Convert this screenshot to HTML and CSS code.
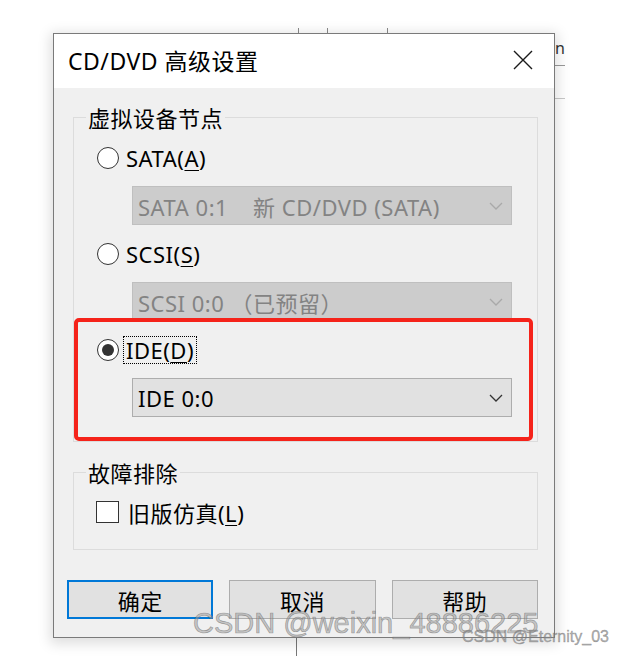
FILE: index.html
```html
<!DOCTYPE html>
<html lang="zh-CN">
<head>
<meta charset="utf-8">
<title>CD/DVD 高级设置</title>
<link rel="stylesheet" href="styles.css">
</head>
<body>
<div class="screen">
  <span class="bgline bl1"></span>
  <span class="bgline bl2"></span>
  <span class="bgline bl3"></span>
  <span class="bgline bl4"></span>
  <span class="bgline hl1"></span>
  <span class="bgline hl2"></span>
  <span class="bgchar">n</span>

  <div class="dialog">
    <div class="titlebar">
      <span class="title">CD/DVD 高级设置</span>
      <svg class="close" width="20" height="20" viewBox="0 0 20 20"><path d="M1 1 L19 19 M19 1 L1 19" stroke="#1a1a1a" stroke-width="1.4" fill="none"/></svg>
    </div>
    <div class="content">
      <div class="group g1">
        <span class="legend">虚拟设备节点</span>
        <div class="opt"><span class="radio"></span><span class="lbl">SATA(<u>A</u>)</span></div>
        <div class="combo disabled"><span class="ctext">SATA 0:1    新 CD/DVD (SATA)</span><svg class="chev" width="14" height="8" viewBox="0 0 14 8"><path d="M1 1 L7 7 L13 1" stroke="#a9a9a9" stroke-width="1.3" fill="none"/></svg></div>
        <div class="opt"><span class="radio"></span><span class="lbl">SCSI(<u>S</u>)</span></div>
        <div class="combo disabled"><span class="ctext">SCSI 0:0 （已预留）</span><svg class="chev" width="14" height="8" viewBox="0 0 14 8"><path d="M1 1 L7 7 L13 1" stroke="#a9a9a9" stroke-width="1.3" fill="none"/></svg></div>
        <div class="opt"><span class="radio on"></span><span class="lbl focus">IDE(<u>D</u>)</span></div>
        <div class="combo last"><span class="ctext">IDE 0:0</span><svg class="chev" width="14" height="8" viewBox="0 0 14 8"><path d="M1 1 L7 7 L13 1" stroke="#333" stroke-width="1.3" fill="none"/></svg></div>
      </div>
      <div class="group g2">
        <span class="legend">故障排除</span>
        <div class="opt chk"><span class="check"></span><span class="lbl">旧版仿真(<u>L</u>)</span></div>
      </div>
      <div class="buttons">
        <div class="btn default">确定</div>
        <div class="btn">取消</div>
        <div class="btn">帮助</div>
      </div>
    </div>
  </div>

  <div class="redbox"></div>
  <div class="wm-big">CSDN @weixin_48886225</div>
  <div class="wm-small">CSDN @Eternity_03</div>
</div>
</body>
</html>
```

FILE: styles.css
```css
* { box-sizing: border-box; }
html, body { margin: 0; padding: 0; background: #fff; }
body {
  font-family: "Noto Sans", "Noto Sans CJK SC", sans-serif;
  color: #000;
  letter-spacing: 0.5px;
}
.screen {
  position: relative;
  width: 622px;
  height: 656px;
  overflow: hidden;
  padding-top: 33px;
  padding-left: 53px;
}

/* background window remnants */
.bgline { position: absolute; background: #8a8a8a; }
.bl1 { left: 298px; top: 28px; width: 1px; height: 6px; }
.bl2 { left: 327px; top: 28px; width: 1px; height: 6px; }
.bl3 { left: 387px; top: 28px; width: 1px; height: 6px; }
.bl4 { left: 296px; top: 638px; width: 1px; height: 18px; background: #777; }
.hl1 { left: 555px; top: 65px; width: 10px; height: 1px; background: #999; }
.hl2 { left: 555px; top: 98px; width: 10px; height: 1px; background: #c8c8c8; }
.bgchar {
  position: absolute; left: 555px; top: 38px;
  font-family: "Noto Sans", sans-serif; font-size: 16px; line-height: 20px; color: #333;
  letter-spacing: 0;
}

.dialog {
  position: relative;
  width: 502px;
  height: 605px;
  border: 1px solid #7a7a7a;
  background: #f0f0f0;
  box-shadow: 0 3px 12px 3px rgba(0,0,0,0.13);
}
.titlebar {
  height: 54px;
  background: #fff;
  display: flex;
  align-items: center;
  justify-content: space-between;
  padding: 0 21px 2px 14px;
}
.title { font-size: 23px; }
.close { display: block; }

.content {
  height: 549px;
  padding: 29px 16px 0 19px;
}
.group {
  border: 1px solid #dcdcdc;
  width: 465px;
}
.legend {
  display: block;
  width: fit-content;
  margin: -13px 0 0 12px;
  padding: 0 2px;
  background: #f0f0f0;
  font-size: 22px;
  line-height: 26px;
}
.g1 { padding-bottom: 24px; }
.g2 { margin-top: 30px; padding-bottom: 19px; }

.opt {
  height: 36px;
  display: flex;
  align-items: center;
  padding-left: 23px;
  gap: 7px;
  font-size: 22px;
}
.g1 .opt:first-of-type { margin-top: 9px; }
.opt.chk { margin-top: 8px; padding-left: 22px; gap: 9px; }
.lbl u { text-decoration-thickness: 1px; text-underline-offset: 3px; }

.radio {
  width: 22px; height: 22px;
  border: 1.6px solid #333;
  border-radius: 50%;
  background: #fff;
  display: flex; align-items: center; justify-content: center;
  flex: none;
}
.radio.on::after {
  content: "";
  width: 12px; height: 12px;
  border-radius: 50%;
  background: #333;
}
.check {
  width: 23px; height: 22px;
  border: 1.6px solid #333;
  background: #fff;
  flex: none;
}
.lbl.focus {
  outline: 1px dotted #000;
  outline-offset: 0;
  margin-left: -2px;
  padding: 0 2px;
  line-height: 26px;
}

.combo {
  margin: 10px 0 11px 58px;
  width: 380px;
  height: 39px;
  border: 1px solid #adadad;
  background: #e1e1e1;
  display: flex;
  align-items: center;
  justify-content: space-between;
  padding: 0 8px 0 5px;
  font-size: 22px;
}
.combo.last { margin-bottom: 0; }
.combo.disabled {
  background: #cccccc;
  border-color: #bfbfbf;
  color: #838383;
}
.ctext { white-space: pre; }
.chev { display: block; }

.buttons {
  display: flex;
  gap: 16px;
  margin: 30px 0 0 -6px;
}
.btn {
  width: 147px;
  height: 39px;
  border: 1px solid #adadad;
  background: #e1e1e1;
  display: flex;
  align-items: center;
  justify-content: center;
  font-size: 22px;
}
.btn.default { border: 2px solid #0078d7; }

.redbox {
  position: absolute;
  left: 74px; top: 318px;
  width: 459px; height: 123px;
  border: 4px solid #f5231a;
  border-radius: 5px;
}
.wm-big {
  position: absolute;
  left: 193px; top: 605px;
  font-family: "Liberation Sans", Arial, sans-serif;
  font-size: 29px;
  line-height: 36px;
  letter-spacing: 0;
  color: rgba(160,160,160,0.55);
  -webkit-text-stroke: 0.7px rgba(100,100,100,0.55);
  white-space: nowrap;
}
.wm-small {
  position: absolute;
  left: 462px; top: 627px;
  font-family: "Liberation Sans", Arial, sans-serif;
  font-size: 16px;
  line-height: 20px;
  letter-spacing: 0;
  color: rgba(140,140,140,0.7);
  -webkit-text-stroke: 0.4px rgba(90,90,90,0.5);
  white-space: nowrap;
}
```
